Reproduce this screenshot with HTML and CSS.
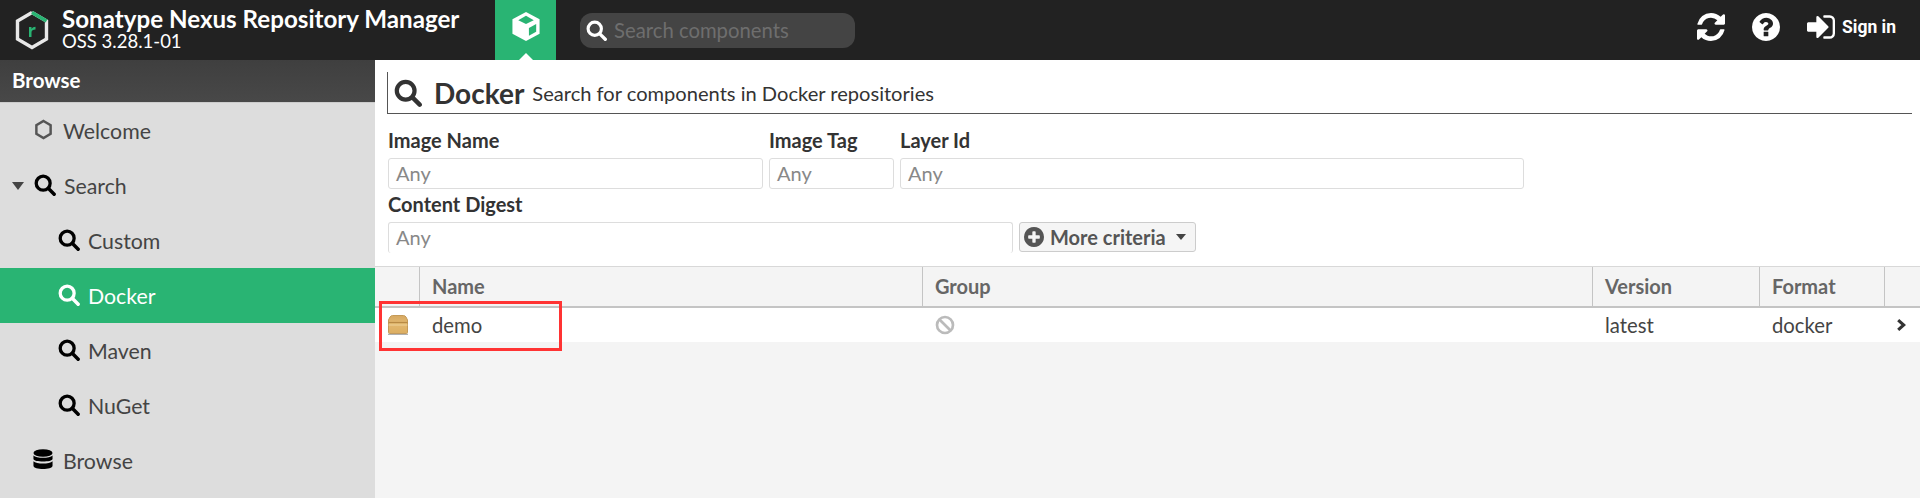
FILE: index.html
```html
<!DOCTYPE html>
<html lang="en">
<head>
<meta charset="utf-8">
<title>Sonatype Nexus Repository Manager</title>
<link rel="stylesheet" href="styles.css">
</head>
<body>
<svg class="defs" width="0" height="0" aria-hidden="true">
  <defs><linearGradient id="g-box" x1="0" y1="0" x2="0" y2="1"><stop offset="0" stop-color="#d6a862"/><stop offset=".45" stop-color="#e2b86f"/><stop offset="1" stop-color="#dcae62"/></linearGradient></defs>
  <symbol id="i-search" viewBox="0 0 24 24"><circle cx="10" cy="10" r="7.6" fill="none" stroke="currentColor" stroke-width="3.6"/><path d="M15.8 15.8L22 22" fill="none" stroke="currentColor" stroke-width="3.8" stroke-linecap="round"/></symbol>
</svg>
<header class="topbar">
  <svg class="logo" viewBox="0 0 36 40" width="36" height="40"><path d="M18 2.5L32.5 11V29L18 37.5L3.500 29V11L18 2.500" fill="none" stroke="#e8e8e8" stroke-width="3.4"/><path d="M18 2.500L32.5 11" fill="none" stroke="#29b473" stroke-width="3.6"/><path d="M15 27V17h2.500v2c1-1.500 2.200-2.200 4-2.200v2.800c-2.400 0-4 .8-4 3V27z" fill="#29b473"/></svg>
  <div class="brand">
    <div class="brand-name">Sonatype Nexus Repository Manager</div>
    <div class="brand-version">OSS 3.28.1-01</div>
  </div>
  <div class="tab">
    <svg viewBox="0 0 30 32" width="32" height="31"><path d="M15 1L29 8.500V23.500L15 31L1 23.500V8.500Z" fill="#fff"/><path d="M15 5L23 9.500L15 13.500L7 9.500Z" fill="#29b473"/><path d="M18 17.500L25.500 13.500V21.500L18 25.500Z" fill="#29b473"/></svg>
  </div>
  <div class="global-search">
    <svg class="gs-icon"><use href="#i-search"/></svg>
    <span>Search components</span>
  </div>
  <div class="actions">
    <svg class="act-refresh" viewBox="128 128 1536 1536"><path fill="#fff" d="M1639 1056q0 5-1 7-64 268-268 434.5t-478 166.5q-146 0-282.5-55t-243.5-157l-129 129q-19 19-45 19t-45-19-19-45v-448q0-26 19-45t45-19h448q26 0 45 19t19 45-19 45l-137 137q71 66 161 102t187 36q134 0 250-65t186-179q11-17 53-117 8-23 30-23h192q13 0 22.5 9.500t9.500 22.500zm25-800v448q0 26-19 45t-45 19h-448q-26 0-45-19t-19-45 19-45l138-138q-148-137-349-137-134 0-250 65t-186 179q-11 17-53 117-8 23-30 23h-199q-13 0-22.500-9.500t-9.500-22.500v-7q65-268 270-434.500t480-166.500q146 0 284 55.500t245 156.500l130-129q19-19 45-19t45 19 19 45z"/></svg>
    <svg class="act-help" viewBox="128 128 1536 1536"><path fill="#fff" d="M1024 1376v-192q0-14-9-23t-23-9h-192q-14 0-23 9t-9 23v192q0 14 9 23t23 9h192q14 0 23-9t9-23zm256-672q0-88-55.500-163t-138.500-116-170-41q-243 0-371 213-15 24 8 42l132 100q7 6 19 6 16 0 25-12 53-68 86-92 34-24 86-24 48 0 85.500 26t37.500 59q0 38-20 61t-68 45q-63 28-115.500 86.500t-52.500 125.500v36q0 14 9 23t23 9h192q14 0 23-9t9-23q0-19 21.500-49.500t54.500-49.500q32-18 49-28.500t46-35 44.500-48 28-60.500 12.500-81zm384 192q0 209-103 385.500t-279.500 279.500-385.500 103-385.500-103-279.500-279.500-103-385.500 103-385.500 279.500-279.500 385.500-103 385.500 103 279.500 279.500 103 385.500z"/></svg>
    <div class="signin">
      <svg viewBox="128 256 1536 1280"><path fill="#fff" d="M1312 896q0 26-19 45l-544 544q-19 19-45 19t-45-19-19-45v-288h-448q-26 0-45-19t-19-45v-384q0-26 19-45t45-19h448v-288q0-26 19-45t45-19 45 19l544 544q19 19 19 45zm352-352v704q0 119-84.500 203.500t-203.500 84.500h-320q-13 0-22.500-9.500t-9.500-22.500q0-4-1-20t-.5-26.500 3-23.500 10-19.500 20.500-6.500h320q66 0 113-47t47-113v-704q0-66-47-113t-113-47h-312l-11.500-1-11.500-3-8-5.500-7-9-2-13.500q0-4-1-20t-.5-26.500 3-23.500 10-19.500 20.500-6.500h320q119 0 203.500 84.500t84.500 203.500z"/></svg>
      <span>Sign in</span>
    </div>
  </div>
</header>
<div class="workspace">
  <nav class="sidebar">
    <div class="side-head">Browse</div>
    <div class="side-row lvl1"><svg class="ico" viewBox="0 0 20 22"><path d="M10 2L17.500 6.500V15.500L10 20L2.500 15.500V6.500Z" fill="none" stroke="#555" stroke-width="2.600"/></svg><span>Welcome</span></div>
    <div class="side-row lvl1 has-caret"><i class="caret"></i><svg class="ico s"><use href="#i-search"/></svg><span>Search</span></div>
    <div class="side-row lvl2"><svg class="ico s"><use href="#i-search"/></svg><span>Custom</span></div>
    <div class="side-row lvl2 active"><svg class="ico s"><use href="#i-search"/></svg><span>Docker</span></div>
    <div class="side-row lvl2"><svg class="ico s"><use href="#i-search"/></svg><span>Maven</span></div>
    <div class="side-row lvl2"><svg class="ico s"><use href="#i-search"/></svg><span>NuGet</span></div>
    <div class="side-row lvl1"><svg class="ico db" viewBox="0 0 20 22"><ellipse cx="10" cy="4.200" rx="10" ry="4" fill="#000"/><path d="M0 6.800C3 10 17 10 20 6.800V10.500C20 14 0 14 0 10.500zM0 12.800C3 16 17 16 20 12.800V17.500C20 22 0 22 0 17.500z" fill="#000"/></svg><span>Browse</span></div>
  </nav>
  <main class="content">
    <section class="panel">
      <div class="title">
        <svg class="title-ico"><use href="#i-search"/></svg>
        <span class="title-main">Docker</span>
        <span class="title-sub">Search for components in Docker repositories</span>
      </div>
      <div class="filters">
        <label class="field w-name"><b>Image Name</b><span class="input">Any</span></label>
        <label class="field w-tag"><b>Image Tag</b><span class="input">Any</span></label>
        <label class="field w-layer"><b>Layer Id</b><span class="input">Any</span></label>
        <label class="field w-digest"><b>Content Digest</b><span class="input">Any</span></label>
        <div class="more">
          <svg viewBox="128 128 1536 1536"><path fill="#555" d="M1344 960v-128q0-26-19-45t-45-19h-256v-256q0-26-19-45t-45-19h-128q-26 0-45 19t-19 45v256h-256q-26 0-45 19t-19 45v128q0 26 19 45t45 19h256v256q0 26 19 45t45 19h128q26 0 45-19t19-45v-256h256q26 0 45-19t19-45zm320-64q0 209-103 385.500t-279.500 279.500-385.500 103-385.500-103-279.500-279.500-103-385.500 103-385.500 279.500-279.500 385.500-103 385.500 103 279.500 279.500 103 385.500z"/></svg>
          <span>More criteria</span><i class="caret small"></i>
        </div>
      </div>
    </section>
    <div class="table">
      <div class="grid thead">
        <div class="cell"></div><div class="cell">Name</div><div class="cell">Group</div><div class="cell">Version</div><div class="cell">Format</div><div class="cell"></div>
      </div>
      <div class="grid tbody">
        <div class="cell pkg"><svg viewBox="0 0 20 20" width="20" height="20"><path d="M4.500.5H15.500Q17 .5 18 2L19.500 5V17.500Q19.500 18.500 18.500 18.500H1.500Q.5 18.500 .5 17.500V5L2 2Q3 .5 4.500 .5Z" fill="url(#g-box)" stroke="#c49a58"/><path d="M.5 7.500H19.500" stroke="#b88a45" stroke-width="1.200"/><path d="M.5 10H19.500" stroke="#efd29a" stroke-width="1"/><path d="M0 19.500H20" stroke="#b0b0b0" stroke-width="1.200"/></svg></div>
        <div class="cell">demo</div>
        <div class="cell"><svg class="no" viewBox="0 0 18 18" width="20" height="20"><circle cx="9" cy="9" r="7.200" fill="none" stroke="#bbb" stroke-width="2.400"/><path d="M4 4L14 14" stroke="#bbb" stroke-width="2.400"/></svg></div>
        <div class="cell">latest</div>
        <div class="cell">docker</div>
        <div class="cell chev"><svg viewBox="0 0 10 12" width="11" height="14"><path d="M2 1.500L7 6L2 10.500" fill="none" stroke="#333" stroke-width="2.800"/></svg></div>
      </div>
      <div class="highlight"></div>
    </div>
  </main>
</div>
</body>
</html>
```
FILE: styles.css
```css
* { box-sizing: border-box; }
html, body { margin: 0; height: 498px; overflow: hidden; }
body { font-family: Lato, "Open Sans", sans-serif; color: #444; background: #f4f4f4; }
.defs { position: absolute; }

.topbar { height: 60px; background: #222; display: flex; align-items: center; color: #fff; }
.logo { margin-left: 14px; flex: none; }
.brand { margin-left: 12px; width: 433px; flex: none; }
.brand-name { font-size: 24.150px; line-height: 24px; font-weight: 700; white-space: nowrap; margin-top: -3px; }
.brand-version { font-size: 18.500px; line-height: 20px; }
.tab { width: 61px; height: 60px; background: #29b473; display: flex; align-items: flex-start; justify-content: center; padding-top: 11px; position: relative; flex: none; }
.tab::after { content: ""; position: absolute; left: 50%; bottom: 0; margin-left: -7px; border: 7px solid transparent; border-top: 0; border-bottom-color: #fff; }
.global-search { margin-left: 24px; width: 275px; height: 35px; border-radius: 12px; background: #444; display: flex; align-items: center; padding-left: 6px; color: #6e6e6e; font-size: 20.300px; flex: none; }
.gs-icon { width: 21px; height: 21px; color: #fff; margin-right: 7px; }
.actions { margin-left: auto; display: flex; align-items: center; padding: 0 24px 6px 0; }
.act-refresh { width: 28px; height: 28px; margin-right: 27px; }
.act-help { width: 28px; height: 28px; margin-right: 27px; }
.signin { display: flex; align-items: center; font-family: Roboto, sans-serif; font-weight: 700; font-size: 17.500px; }
.signin svg { width: 28px; height: 24px; margin-right: 7px; }

.workspace { display: flex; height: 438px; }
.sidebar { width: 375px; background: #ddd; flex: none; }
.side-head { height: 43px; background: linear-gradient(#3f3f3f, #484848); border-bottom: 1px solid #ccc; color: #fff; font-size: 20.500px; font-weight: 700; line-height: 41px; padding-left: 12px; }
.side-row { height: 55px; display: flex; align-items: center; font-size: 21.300px; color: #444; position: relative; }
.side-row.lvl1 { padding-left: 34px; }
.side-row.lvl2 { padding-left: 58px; }
.side-row.active { background: #29b473; color: #fff; }
.ico { width: 19px; height: 21px; margin: 0 10px 2px 0; flex: none; }
.ico.s { width: 22px; height: 22px; color: #000; margin-right: 8px; }
.ico.db { width: 20px; margin-left: -1px; }
.active .ico.s { color: #fff; }
.caret { display: block; border: 6px solid transparent; border-bottom: 0; border-top: 8px solid #444; }
.has-caret .caret { position: absolute; left: 12px; top: 24px; }

.content { flex: 1; display: flex; flex-direction: column; min-width: 0; }
.panel { background: #fff; height: 206px; padding: 12px 8px 0 12px; }
.title { height: 42px; border-left: 1px solid #555; border-bottom: 1px solid #555; display: flex; align-items: center; padding-left: 6px; color: #333; }
.title-ico { width: 28px; height: 30px; color: #333; margin-right: 12px; }
.title-main { font-size: 28px; font-weight: 700; margin-right: 8px; }
.title-sub { font-size: 20.100px; }
.filters { display: flex; flex-wrap: wrap; column-gap: 6px; width: 1140px; margin: 13px 0 0 1px; }
.field { display: block; height: 64px; }
.field b { display: block; font-size: 20px; line-height: 22px; height: 31px; color: #333; padding-top: 2px; }
.input { display: block; height: 31px; border: 1px solid #ddd; border-radius: 3px; padding-left: 7px; font-size: 20px; line-height: 29px; color: #888; background: #fff; }
.w-name { width: 375px; }
.w-tag { width: 125px; }
.w-layer { width: 624px; }
.w-digest { width: 625px; }
.w-digest .input { border-bottom: 0; }
.more { align-self: flex-start; margin-top: 31px; width: 177px; height: 30px; background: #f5f5f5; border: 1px solid #ccc; border-radius: 3px; display: flex; align-items: center; padding-left: 4px; font-size: 20px; line-height: 26px; font-weight: 700; color: #555; }
.more svg { width: 20px; height: 20px; margin-right: 6px; }
.caret.small { border-width: 5px; border-top-width: 6px; border-bottom: 0; margin-left: 10px; }

.table { position: relative; }
.grid { display: grid; grid-template-columns: 45px 503px 670px 167px 125px 35px; }
.thead { height: 42px; background: #f4f4f4; border-top: 1px solid #d8d8d8; border-bottom: 2px solid #c4c4c4; font-size: 20px; font-weight: 700; color: #666; }
.thead .cell { border-right: 1px solid #c4c4c4; padding: 0 12px; line-height: 39px; }
.thead .cell:last-child { border-right: 0; }
.tbody { height: 34px; background: #fff; font-size: 20.300px; color: #444; }
.tbody .cell { padding: 0 12px; display: flex; align-items: center; }
.tbody .pkg { padding: 0 0 0 13px; }
.tbody .chev { padding-left: 11px; }
.highlight { position: absolute; left: 4px; top: 35px; width: 183px; height: 50px; border: 3px solid #f33; }
```
